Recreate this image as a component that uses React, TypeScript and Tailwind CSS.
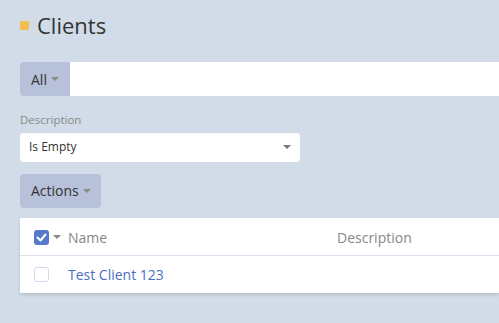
import React from "react";

const Caret = ({ className = "" }: { className?: string }) => (
  <svg width="8" height="4" viewBox="0 0 8 4" className={className}>
    <path d="M0 0h8L4 4z" fill="currentColor" />
  </svg>
);

export default function App() {
  return (
    <div
      className="w-[499px] h-[323px] bg-[#d1dce8] overflow-hidden pl-[20px]"
      style={{ fontFamily: '"Open Sans", sans-serif' }}
    >
      <div className="flex items-center h-[48px] pt-[2px]">
        <div className="w-[9px] h-[9px] bg-[#f3bf4f] rounded-[1px]" />
        <div className="ml-[8px] text-[22px] text-[#333] leading-none">Clients</div>
      </div>
      <div className="mt-[14px] flex h-[34px]">
        <div className="w-[50px] bg-[#b8c1da] rounded-l-[4px] flex items-center pl-[11px] text-[14px] text-[#333]">
          All
          <Caret className="ml-[4px] text-[#888]" />
        </div>
        <div className="flex-1 bg-white" />
      </div>
      <div className="mt-[18px] text-[11.5px] text-[#888] leading-none">Description</div>
      <div className="mt-[7px] w-[280px] h-[29px] bg-white rounded-[4px] flex items-center justify-between pl-[9px] pr-[9px] text-[12px] text-[#333]">
        <span>Is Empty</span>
        <Caret className="text-[#777]" />
      </div>
      <div className="mt-[12px] w-[81px] h-[34px] bg-[#b8c1da] rounded-[4px] flex items-center pl-[11px] text-[14px] text-[#333]">
        Actions
        <Caret className="ml-[4px] text-[#888]" />
      </div>
      <div className="mt-[10px] bg-white shadow-[0_2px_3px_rgba(0,0,0,0.12)]">
        <div className="h-[38px] flex items-center border-b border-[#dde0ee] text-[14px] text-[#888] pt-[2px]">
          <div className="ml-[14px] w-[15px] h-[15px] rounded-[3px] bg-[#5779c9] flex items-center justify-center">
            <svg width="11" height="9" viewBox="0 0 11 9">
              <path d="M1.5 4.5l3 3L9.5 1.5" stroke="white" strokeWidth="2" fill="none" strokeLinecap="round" strokeLinejoin="round" />
            </svg>
          </div>
          <Caret className="ml-[4px] text-[#888]" />
          <div className="ml-[7px] w-[269px]">Name</div>
          <div>Description</div>
        </div>
        <div className="h-[37px] flex items-center text-[14px] pt-[1px]">
          <div className="ml-[14px] w-[15px] h-[15px] rounded-[3px] border border-[#d4d9ea] bg-white" />
          <div className="ml-[19px] text-[#4a6fc1]">Test Client 123</div>
        </div>
      </div>
    </div>
  );
}
